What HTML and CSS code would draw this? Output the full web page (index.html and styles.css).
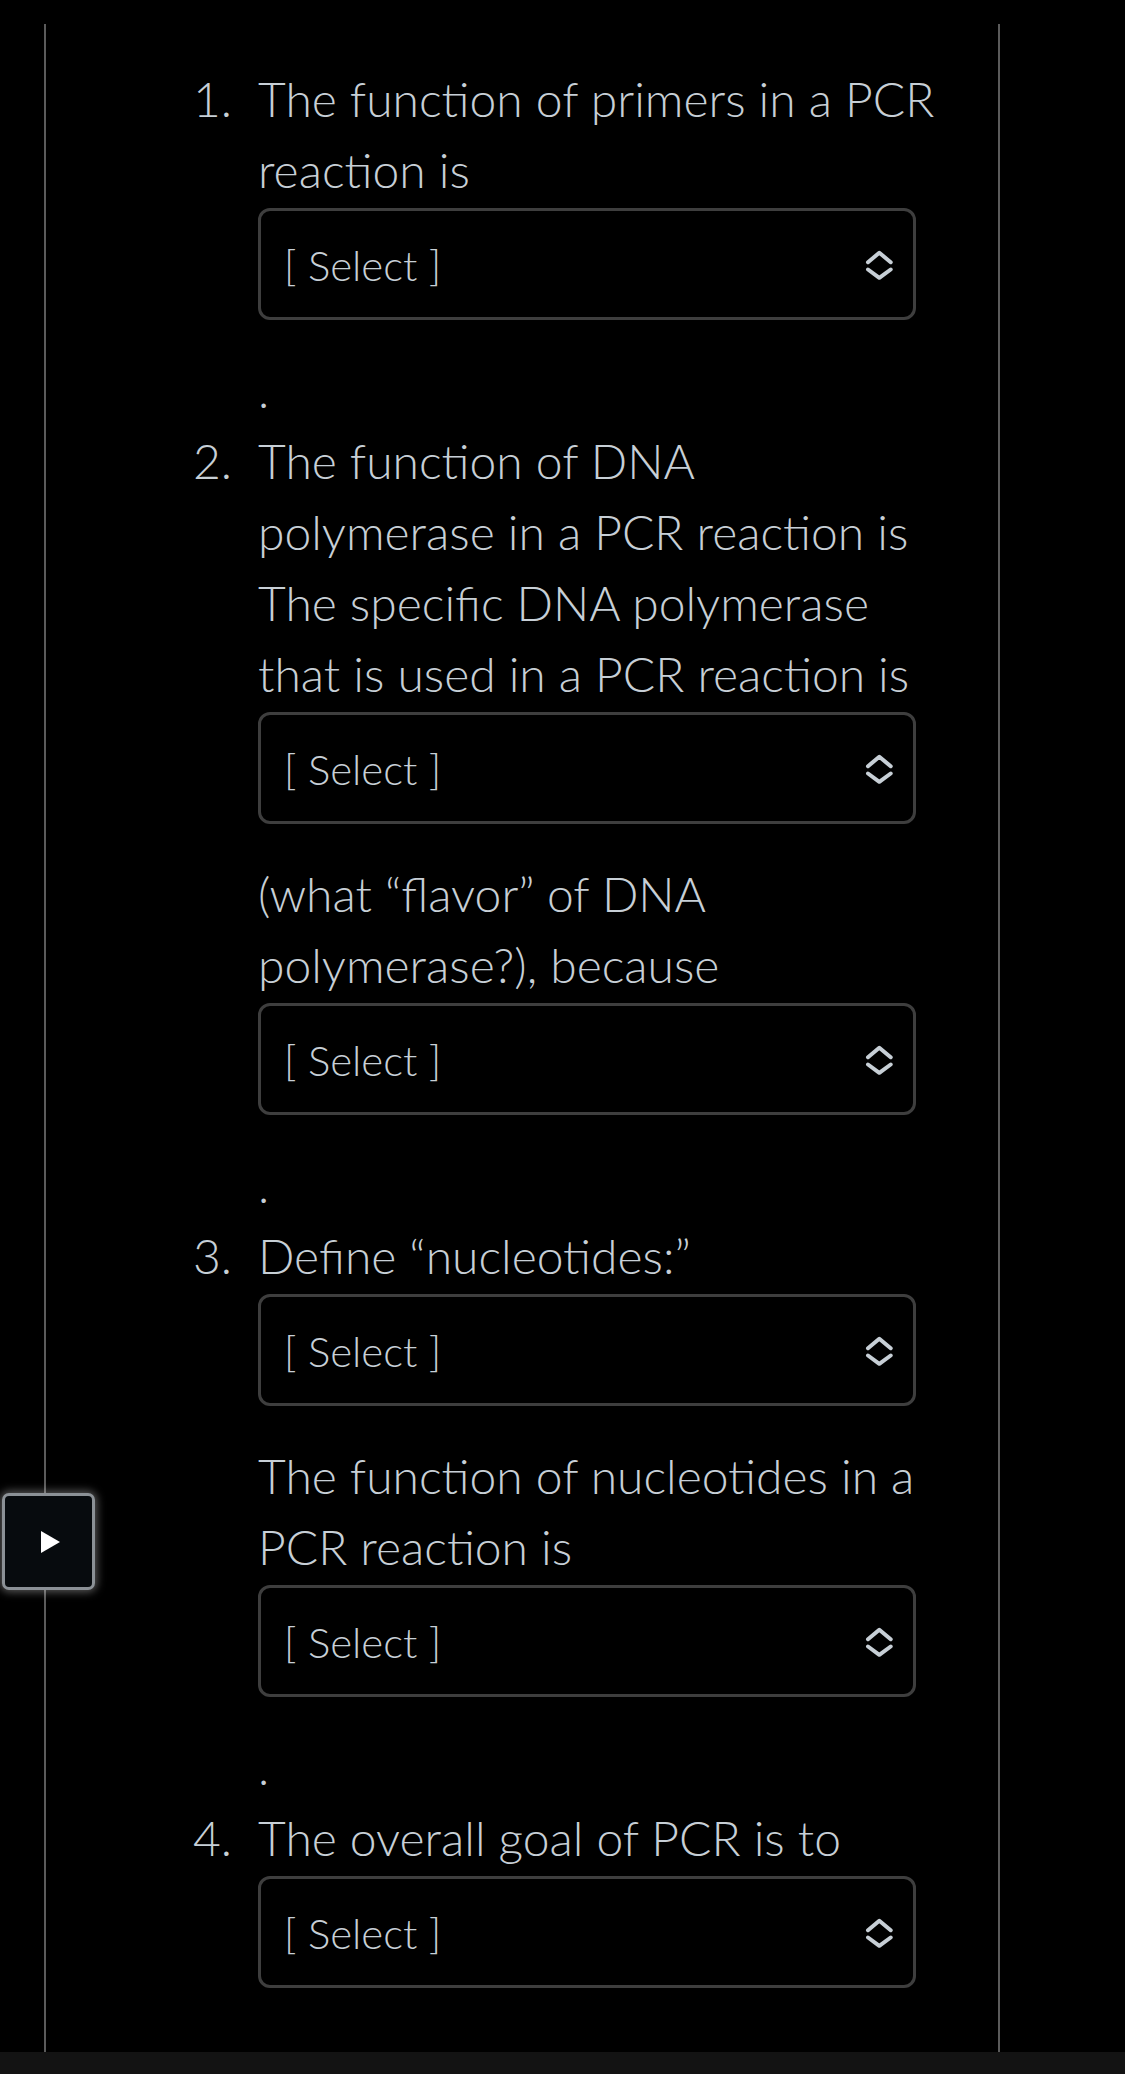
FILE: index.html
```html
<!DOCTYPE html>
<html lang="en">
<head>
<meta charset="utf-8">
<title>PCR Quiz</title>
<link rel="stylesheet" href="styles.css">
</head>
<body>
<div class="page">
  <div class="frame">
    <ol class="quiz">
      <li class="item">
        <span class="num">1.</span>
        <div class="body">
          <p class="line">The function of primers in a PCR reaction is</p>
          <div class="select" role="combobox"><span class="sel-text">[ Select ]</span><svg class="chev" viewBox="0 0 28 32" width="28" height="32"><path d="M3 13.2 L14.3 3.8 L25.7 13.2 M3 20.5 L14.3 28.8 L25.7 20.5"/></svg></div>
          <p class="line">.</p>
        </div>
      </li>
      <li class="item">
        <span class="num">2.</span>
        <div class="body">
          <p class="line">The function of DNA polymerase in a PCR reaction is The specific DNA polymerase that is used in a PCR reaction is</p>
          <div class="select" role="combobox"><span class="sel-text">[ Select ]</span><svg class="chev" viewBox="0 0 28 32" width="28" height="32"><path d="M3 13.2 L14.3 3.8 L25.7 13.2 M3 20.5 L14.3 28.8 L25.7 20.5"/></svg></div>
          <p class="line">(what “flavor” of DNA polymerase?), because</p>
          <div class="select" role="combobox"><span class="sel-text">[ Select ]</span><svg class="chev" viewBox="0 0 28 32" width="28" height="32"><path d="M3 13.2 L14.3 3.8 L25.7 13.2 M3 20.5 L14.3 28.8 L25.7 20.5"/></svg></div>
          <p class="line">.</p>
        </div>
      </li>
      <li class="item">
        <span class="num">3.</span>
        <div class="body">
          <p class="line">Define “nucleotides:”</p>
          <div class="select" role="combobox"><span class="sel-text">[ Select ]</span><svg class="chev" viewBox="0 0 28 32" width="28" height="32"><path d="M3 13.2 L14.3 3.8 L25.7 13.2 M3 20.5 L14.3 28.8 L25.7 20.5"/></svg></div>
          <p class="line">The function of nucleotides in a PCR reaction is</p>
          <div class="select" role="combobox"><span class="sel-text">[ Select ]</span><svg class="chev" viewBox="0 0 28 32" width="28" height="32"><path d="M3 13.2 L14.3 3.8 L25.7 13.2 M3 20.5 L14.3 28.8 L25.7 20.5"/></svg></div>
          <p class="line">.</p>
        </div>
      </li>
      <li class="item">
        <span class="num">4.</span>
        <div class="body">
          <p class="line">The overall goal of PCR is to</p>
          <div class="select" role="combobox"><span class="sel-text">[ Select ]</span><svg class="chev" viewBox="0 0 28 32" width="28" height="32"><path d="M3 13.2 L14.3 3.8 L25.7 13.2 M3 20.5 L14.3 28.8 L25.7 20.5"/></svg></div>
        </div>
      </li>
    </ol>
  </div>
  <div class="footer"></div>
  <button class="play" type="button" aria-label="Play"><svg viewBox="0 0 19 22" width="19" height="22"><path d="M0 0 L19 11 L0 22 Z"/></svg></button>
</div>
</body>
</html>
```

FILE: styles.css
```css
html, body {
  margin: 0;
  padding: 0;
  background: #000;
}

body {
  font-family: "Lato Light", Lato, "Noto Sans", "Liberation Sans", sans-serif;
  font-weight: 300;
  color: #c7cfd6;
}

.page {
  position: relative;
  min-height: 2074px;
  box-sizing: border-box;
  padding-top: 24px;
  display: flex;
  flex-direction: column;
}

.frame {
  flex: 1;
  width: 956px;
  margin-left: 44px;
  box-sizing: border-box;
  border-left: 2px solid #5b5b5b;
  border-right: 2px solid #5b5b5b;
  padding: 39px 0 0 147px;
}

.footer {
  height: 22px;
  background: #131313;
}

.quiz {
  list-style: none;
  margin: 0;
  padding: 0;
}

.item {
  display: grid;
  grid-template-columns: 65px 680px;
  font-size: 48px;
  line-height: 71px;
}

.num {
  display: block;
}

.line {
  margin: 0;
}

.select {
  width: 658px;
  height: 112px;
  margin: 3px 0 34px;
  box-sizing: border-box;
  border: 3px solid #3e3e3e;
  border-radius: 12px;
  padding: 2px 20px 0 23px;
  display: flex;
  align-items: center;
  justify-content: space-between;
  font-size: 42px;
  line-height: 50px;
  color: #c7cfd6;
}

.item:last-child .select {
  margin-bottom: 0;
}

.chev {
  display: block;
  fill: none;
  stroke: #c7cfd6;
  stroke-width: 4;
  stroke-linecap: round;
  stroke-linejoin: round;
}

.play {
  position: absolute;
  left: 2px;
  top: 1493px;
  width: 93px;
  height: 97px;
  box-sizing: border-box;
  padding: 0 0 0 3px;
  border: 3px solid #8b9196;
  border-radius: 7px;
  background: #070b0e;
  box-shadow: 0 0 9px 2px rgba(255, 255, 255, 0.35);
  display: flex;
  align-items: center;
  justify-content: center;
}

.play svg {
  display: block;
  fill: #ffffff;
}
```
